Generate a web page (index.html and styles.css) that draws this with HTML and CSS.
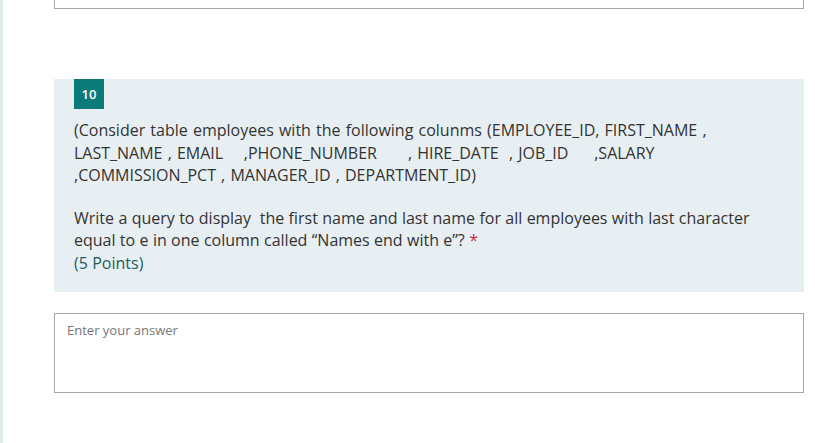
FILE: index.html
```html
<!DOCTYPE html>
<html lang="en">
<head>
<meta charset="utf-8">
<title>Question 10</title>
<link rel="stylesheet" href="styles.css">
</head>
<body>
<div class="page">
  <div class="stripe"></div>
  <main class="content">
    <div class="prev-answer"></div>
    <section class="question">
      <div class="badge">10</div>
      <div class="title">
        <p class="para wide">(Consider table employees with the following colunms (EMPLOYEE_ID, FIRST_NAME ,<br>LAST_NAME , EMAIL &nbsp;&nbsp;&nbsp;,PHONE_NUMBER &nbsp;&nbsp;&nbsp;&nbsp;&nbsp;, HIRE_DATE &nbsp;, JOB_ID &nbsp;&nbsp;&nbsp;&nbsp;,SALARY<br>,COMMISSION_PCT , MANAGER_ID , DEPARTMENT_ID)</p>
        <p class="para">Write a query to display &nbsp;the first name and last name for all employees with last character<br>equal to e in one column called “Names end with e”? <span class="req">*</span></p>
        <p class="points">(5 Points)</p>
      </div>
    </section>
    <div class="answer">Enter your answer</div>
  </main>
</div>
</body>
</html>
```

FILE: styles.css
```css
html, body {
  margin: 0;
  padding: 0;
  background: #ffffff;
}
body {
  font-family: "Open Sans", "Noto Sans", sans-serif;
  color: #333333;
}
.page {
  display: flex;
  height: 443px;
  overflow: hidden;
}
.stripe {
  width: 3px;
  flex: none;
  background: #e1e9ec;
}
.content {
  margin-left: 51px;
  width: 750px;
  display: flex;
  flex-direction: column;
}
.prev-answer {
  height: 8px;
  border: 1px solid #a6a6a6;
  border-top: none;
  margin-bottom: 70px;
}
.question {
  background: #e8eff2;
  padding: 0 20px 18px 20px;
}
.badge {
  width: 30px;
  height: 30px;
  background: #0b7a78;
  color: #ffffff;
  font-size: 13px;
  font-weight: 600;
  display: flex;
  align-items: center;
  justify-content: center;
}
.title {
  margin-top: 10px;
  font-size: 16px;
  line-height: 22.5px;
  word-spacing: 0.2px;
}
.para {
  margin: 0 0 20px 0;
}
.para.wide {
  word-spacing: 1px;
}
.para + .para {
  margin-bottom: 0;
}
.req {
  color: #c4314b;
}
.points {
  margin: 0;
  color: #1b5f63;
}
.answer {
  margin-top: 21px;
  height: 80px;
  border: 1px solid #a6a6a6;
  padding: 7px 12px;
  box-sizing: border-box;
  font-size: 13px;
  color: #767676;
}
```
